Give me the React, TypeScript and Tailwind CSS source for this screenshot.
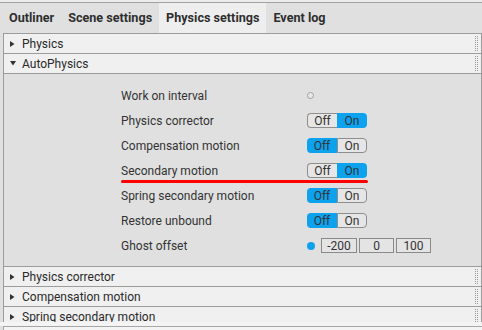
import React from "react";

function Grip() {
  const ys = [0, 2, 4, 6, 8, 10, 12, 14];
  return (
    <svg width="3" height="15" viewBox="0 0 3 15" className="block">
      {ys.map((y) => (
        <React.Fragment key={y}>
          <rect x="0" y={y} width="1" height="1" fill="#9a9a9a" />
          <rect x="2" y={y} width="1" height="1" fill="#9a9a9a" />
        </React.Fragment>
      ))}
    </svg>
  );
}

function Header({ title, open }: { title: string; open?: boolean }) {
  return (
    <div className="h-[20px] border-t border-[#9c9c9c] bg-[#f0f0f0] flex items-center pl-[6px] pr-[3px]">
      <div className="w-[12px] flex items-center">
        {open ? (
          <svg width="6" height="5" viewBox="0 0 6 5" className="block">
            <polygon points="0,0 6,0 3,4.5" fill="#333" />
          </svg>
        ) : (
          <svg width="5" height="6" viewBox="0 0 5 6" className="block">
            <polygon points="0,0 4.5,3 0,6" fill="#333" />
          </svg>
        )}
      </div>
      <span className="text-[12px] text-[#2a2a2a] leading-none flex-1">{title}</span>
      <Grip />
    </div>
  );
}

function Toggle({ on }: { on: boolean }) {
  const active = "bg-[#0ca2ee]";
  const inactive = "bg-[#e6e6e6] border-[#8e8e8e]";
  return (
    <div className="flex w-[60px] h-[15px] text-[12px] leading-none text-[#333]">
      <div
        className={
          "w-[30px] flex items-center justify-center rounded-l-[4px] " +
          (!on ? active : inactive + " border-t border-b border-l")
        }
      >
        Off
      </div>
      <div
        className={
          "w-[30px] flex items-center justify-center rounded-r-[4px] " +
          (on ? active : inactive + " border-t border-b border-r border-l")
        }
      >
        On
      </div>
    </div>
  );
}

function Row({ label, children, mark }: { label: string; children: React.ReactNode; mark?: boolean }) {
  return (
    <div className="relative h-[25px] flex items-center">
      <div className="w-[186px] text-[12px] text-[#333] leading-none">{label}</div>
      <div className="flex items-center">{children}</div>
      {mark && (
        <div className="absolute left-0 bottom-0 w-[247px] h-[3px] rounded-full bg-[#ff0000]" />
      )}
    </div>
  );
}

export default function App() {
  return (
    <div className="w-[482px] h-[330px] overflow-hidden bg-[#e0e0e0] font-['Roboto',sans-serif] flex flex-col">
      <div className="h-[2px] bg-[#ececec]" />
      <div className="h-[1px] bg-[#a2a2a2]" />
      <div className="h-[30px] flex pl-[2px] text-[12.6px] font-bold text-[#2e2e2e]">
        <div className="px-[7px] flex items-center">Outliner</div>
        <div className="px-[7px] flex items-center">Scene settings</div>
        <div className="px-[7px] flex items-center bg-[#eeeeee]">Physics settings</div>
        <div className="px-[7px] flex items-center">Event log</div>
      </div>
      <div className="ml-[3px] w-[479px] h-[289px] overflow-hidden border-l border-r border-[#9c9c9c] shrink-0">
        <Header title="Physics" />
        <Header title="AutoPhysics" open />
        <div className="h-[193px] border-t border-[#9c9c9c] bg-[#e0e0e0] pl-[117px] pt-[9px]">
          <Row label="Work on interval">
            <div className="w-[7px] h-[7px] rounded-full border border-[#a0a0a0] bg-[#e8e8e8]" />
          </Row>
          <Row label="Physics corrector">
            <Toggle on={true} />
          </Row>
          <Row label="Compensation motion">
            <Toggle on={false} />
          </Row>
          <Row label="Secondary motion" mark>
            <Toggle on={true} />
          </Row>
          <Row label="Spring secondary motion">
            <Toggle on={false} />
          </Row>
          <Row label="Restore unbound">
            <Toggle on={false} />
          </Row>
          <Row label="Ghost offset">
            <div className="flex items-center">
              <div className="w-[8px] h-[8px] rounded-full bg-[#0ca2ee] mr-[6px]" />
              <div className="flex gap-[2px] text-[12px] leading-none text-[#333]">
                <div className="w-[36px] h-[15px] border border-[#8a8a8a] bg-[#e4e4e4] flex items-center justify-center">-200</div>
                <div className="w-[35px] h-[15px] border border-[#8a8a8a] bg-[#e4e4e4] flex items-center justify-center">0</div>
                <div className="w-[35px] h-[15px] border border-[#8a8a8a] bg-[#e4e4e4] flex items-center justify-center">100</div>
              </div>
            </div>
          </Row>
        </div>
        <Header title="Physics corrector" />
        <Header title="Compensation motion" />
        <Header title="Spring secondary motion" />
      </div>
      <div className="h-[4px] bg-[#f4f4f4] shrink-0" />
      <div className="flex-1 ml-[3px] border-t border-l border-[#a6a6a6] bg-[#f4f4f4]" />
    </div>
  );
}
